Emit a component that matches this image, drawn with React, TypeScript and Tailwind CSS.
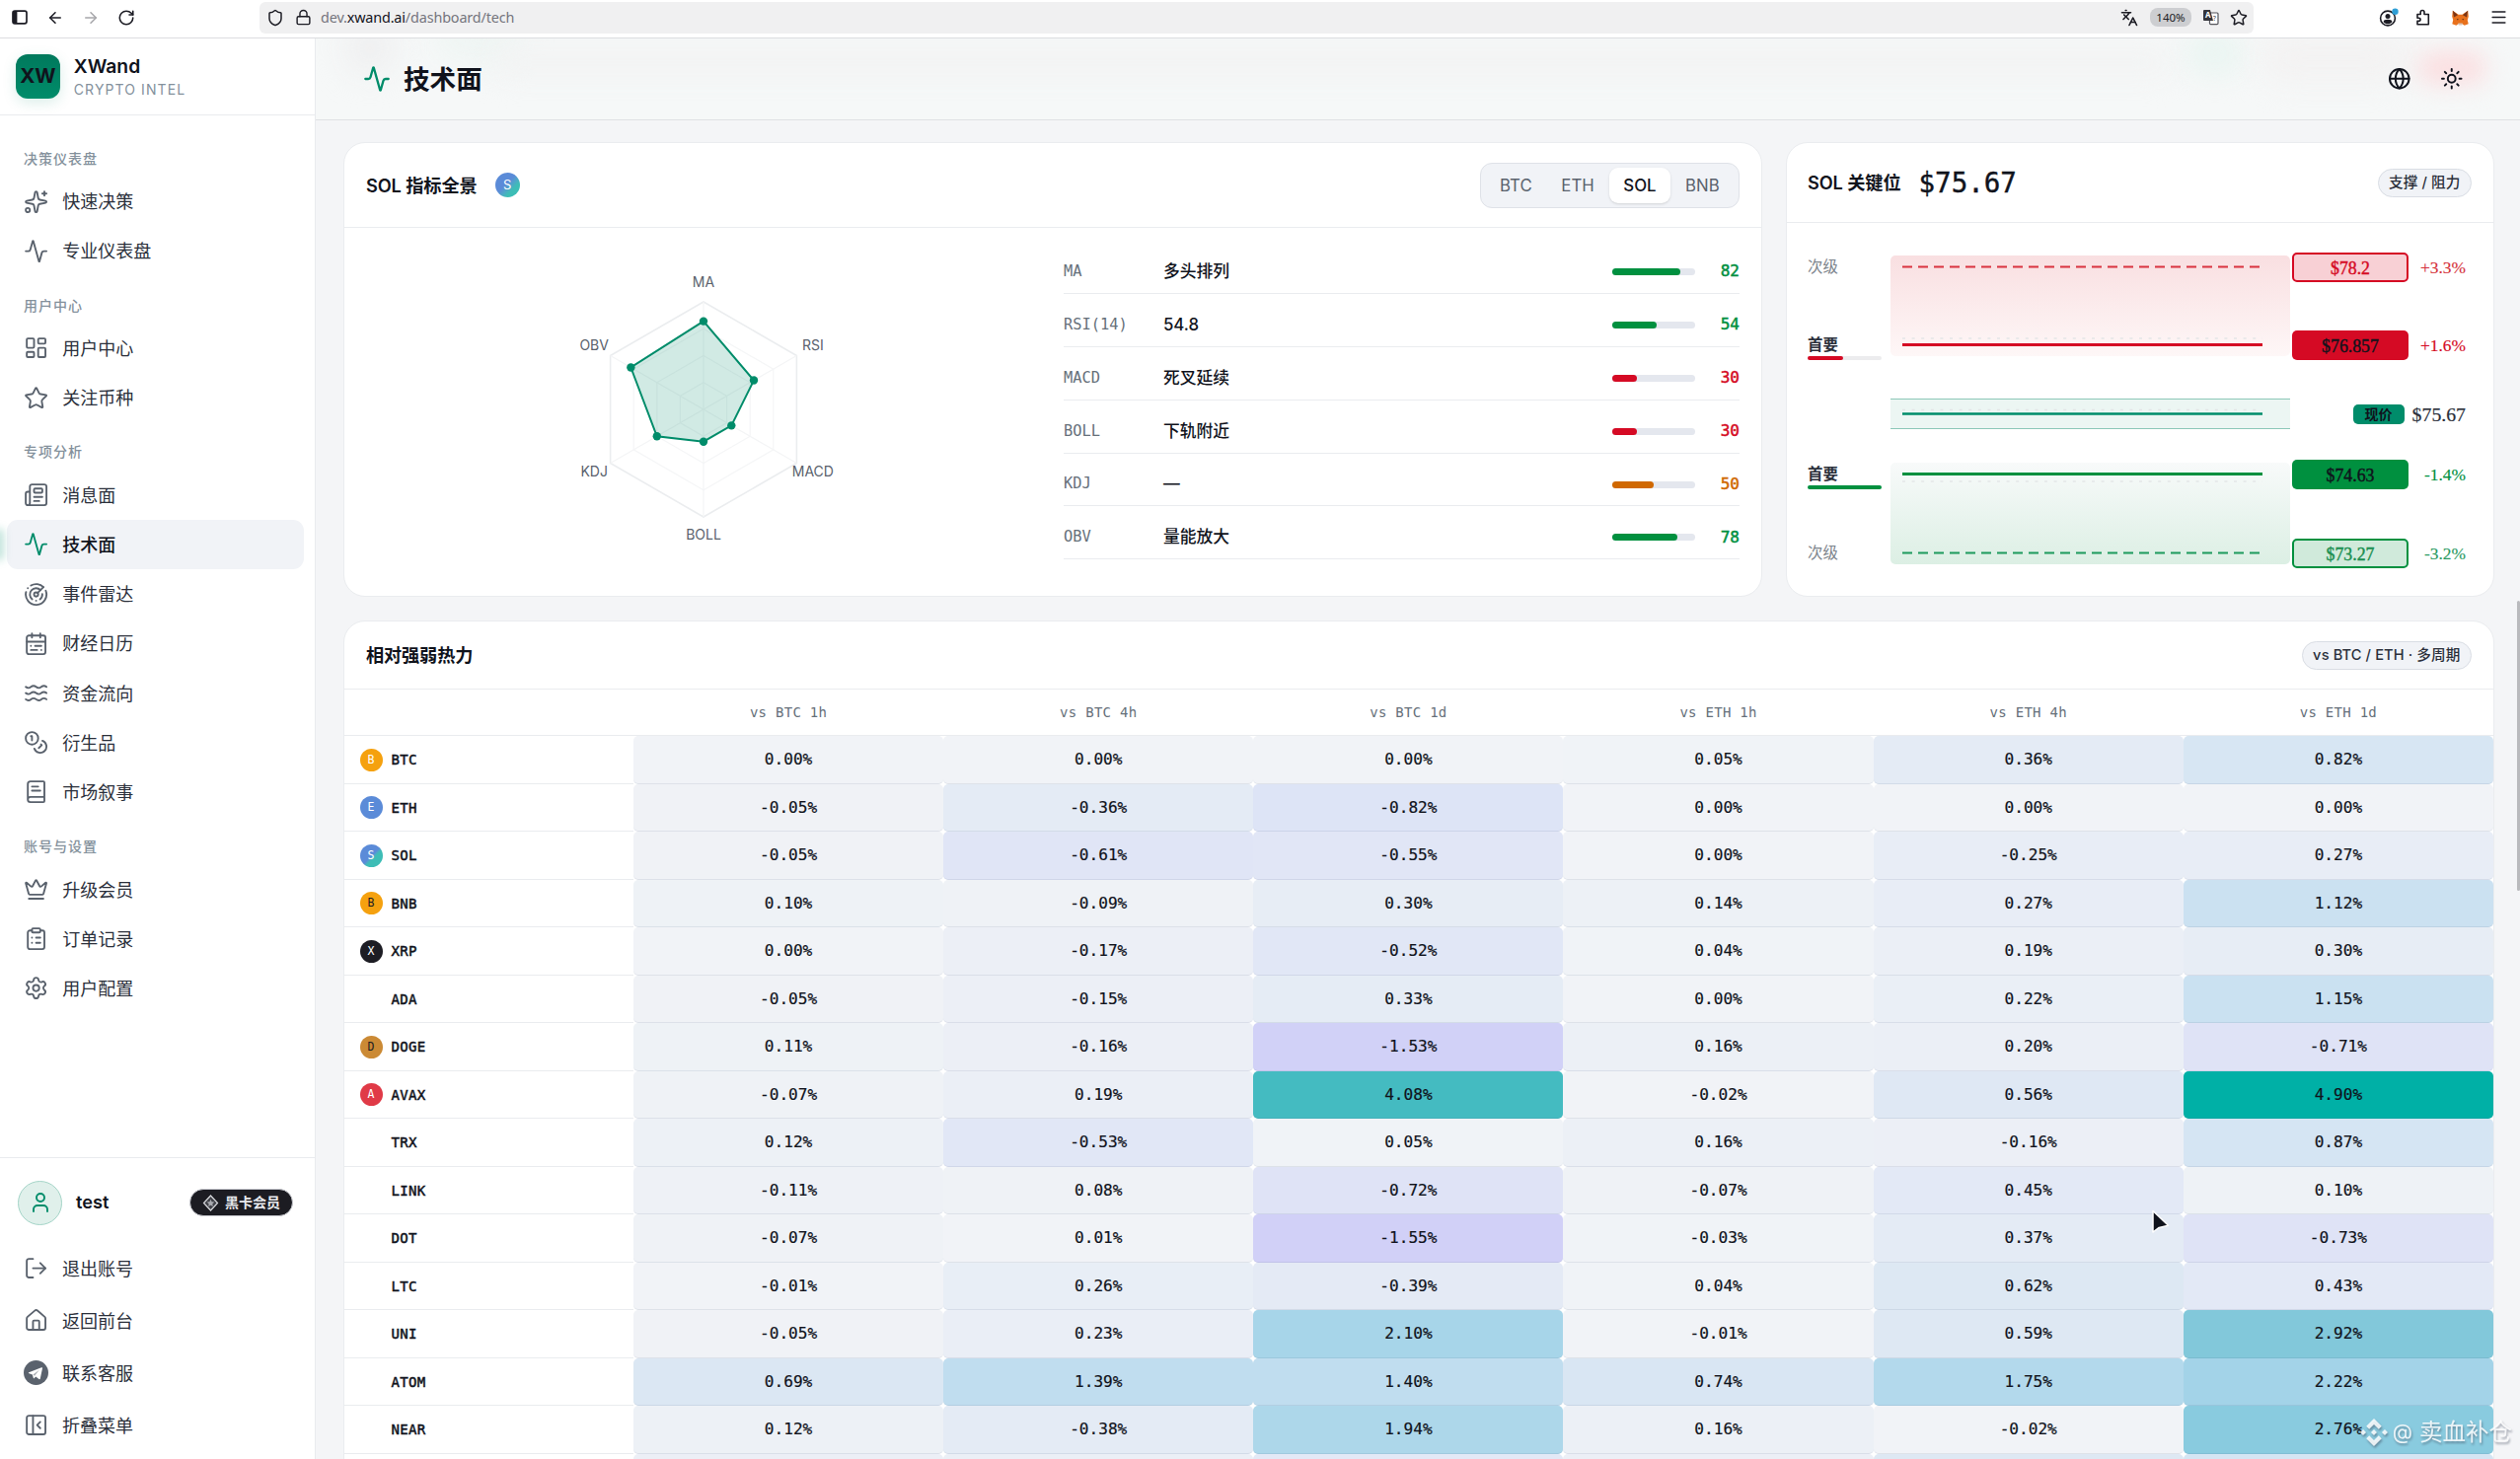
import type { ReactNode } from "react";
import clsx from "clsx";
import {
  Activity,
  ArrowLeft,
  ArrowRight,
  BookText,
  CalendarRange,
  ClipboardList,
  Coins,
  Crown,
  Globe,
  House,
  Languages,
  LayoutDashboard,
  Lock,
  LogOut,
  LucideIcon,
  Menu,
  Newspaper,
  PanelLeftClose,
  Radar,
  RotateCw,
  Settings,
  Shield,
  Sparkles,
  Star,
  Sun,
  User,
  Waves,
} from "lucide-react";

interface NavItem {
  label: string;
  icon: LucideIcon;
}

interface NavGroup {
  title: string;
  items: NavItem[];
}

interface Indicator {
  name: string;
  axis: string;
  value: string;
  score: number;
}

interface HeatRow {
  coin: string;
  badge?: string;
  values: number[];
}

const SANS = "font-['Inter','Noto_Sans_CJK_SC',sans-serif]";
const MONO = "font-['DejaVu_Sans_Mono','Liberation_Mono',monospace]";
const SERIF = "font-['Liberation_Serif',serif]";

const navGroups: NavGroup[] = [
  {
    title: "决策仪表盘",
    items: [
      { label: "快速决策", icon: Sparkles },
      { label: "专业仪表盘", icon: Activity },
    ],
  },
  {
    title: "用户中心",
    items: [
      { label: "用户中心", icon: LayoutDashboard },
      { label: "关注币种", icon: Star },
    ],
  },
  {
    title: "专项分析",
    items: [
      { label: "消息面", icon: Newspaper },
      { label: "技术面", icon: Activity },
      { label: "事件雷达", icon: Radar },
      { label: "财经日历", icon: CalendarRange },
      { label: "资金流向", icon: Waves },
      { label: "衍生品", icon: Coins },
      { label: "市场叙事", icon: BookText },
    ],
  },
  {
    title: "账号与设置",
    items: [
      { label: "升级会员", icon: Crown },
      { label: "订单记录", icon: ClipboardList },
      { label: "用户配置", icon: Settings },
    ],
  },
];

const indicators: Indicator[] = [
  { name: "MA", axis: "MA", value: "多头排列", score: 82 },
  { name: "RSI(14)", axis: "RSI", value: "54.8", score: 54 },
  { name: "MACD", axis: "MACD", value: "死叉延续", score: 30 },
  { name: "BOLL", axis: "BOLL", value: "下轨附近", score: 30 },
  { name: "KDJ", axis: "KDJ", value: "—", score: 50 },
  { name: "OBV", axis: "OBV", value: "量能放大", score: 78 },
];

const heatColumns = ["vs BTC 1h", "vs BTC 4h", "vs BTC 1d", "vs ETH 1h", "vs ETH 4h", "vs ETH 1d"];

const heatRows: HeatRow[] = [
  { coin: "BTC", badge: "bg-[#f5a10f] text-white", values: [0, 0, 0, 0.05, 0.36, 0.82] },
  { coin: "ETH", badge: "bg-[#5b8bd8] text-white", values: [-0.05, -0.36, -0.82, 0, 0, 0] },
  {
    coin: "SOL",
    badge: "bg-linear-135 from-[#5b8bd8] from-50% to-[#3dbdb6] to-60% text-white",
    values: [-0.05, -0.61, -0.55, 0, -0.25, 0.27],
  },
  { coin: "BNB", badge: "bg-[#f5a10f] text-[#1c1c22]", values: [0.1, -0.09, 0.3, 0.14, 0.27, 1.12] },
  { coin: "XRP", badge: "bg-[#1d1d24] text-white", values: [0, -0.17, -0.52, 0.04, 0.19, 0.3] },
  { coin: "ADA", values: [-0.05, -0.15, 0.33, 0, 0.22, 1.15] },
  { coin: "DOGE", badge: "bg-[#cb8a35] text-[#1c1c22]", values: [0.11, -0.16, -1.53, 0.16, 0.2, -0.71] },
  { coin: "AVAX", badge: "bg-[#e03a47] text-white", values: [-0.07, 0.19, 4.08, -0.02, 0.56, 4.9] },
  { coin: "TRX", values: [0.12, -0.53, 0.05, 0.16, -0.16, 0.87] },
  { coin: "LINK", values: [-0.11, 0.08, -0.72, -0.07, 0.45, 0.1] },
  { coin: "DOT", values: [-0.07, 0.01, -1.55, -0.03, 0.37, -0.73] },
  { coin: "LTC", values: [-0.01, 0.26, -0.39, 0.04, 0.62, 0.43] },
  { coin: "UNI", values: [-0.05, 0.23, 2.1, -0.01, 0.59, 2.92] },
  { coin: "ATOM", values: [0.69, 1.39, 1.4, 0.74, 1.75, 2.22] },
  { coin: "NEAR", values: [0.12, -0.38, 1.94, 0.16, -0.02, 2.76] },
];

type Stop = [number, number, number, number];

const heatStops: Stop[] = [
  [-1.55, 209, 208, 247],
  [-0.82, 221, 228, 246],
  [-0.72, 223, 227, 246],
  [-0.61, 224, 229, 246],
  [-0.36, 228, 235, 245],
  [-0.16, 236, 239, 246],
  [-0.08, 239, 242, 246],
  [0, 241, 243, 247],
  [0.1, 238, 242, 246],
  [0.2, 235, 239, 246],
  [0.36, 228, 235, 245],
  [0.45, 227, 233, 246],
  [0.6, 222, 232, 243],
  [0.87, 213, 229, 243],
  [1.4, 192, 221, 239],
  [1.75, 179, 217, 236],
  [2.22, 163, 211, 232],
  [2.76, 137, 203, 223],
  [2.92, 130, 200, 218],
  [4.08, 68, 187, 193],
  [4.9, 0, 176, 166],
];

// interpolate between the two nearest stops
function heatColor(v: number) {
  let i = heatStops.findIndex((s) => s[0] >= v);
  if (i < 1) i = 1;
  const a = heatStops[i - 1];
  const b = heatStops[i];
  const t = (v - a[0]) / (b[0] - a[0]);
  const mix = (k: number) => Math.round(a[k] + (b[k] - a[k]) * t);
  return `rgb(${mix(1)}, ${mix(2)}, ${mix(3)})`;
}

function BrowserBar() {
  return (
    <div className="h-[39px] shrink-0 flex items-center bg-white border-b border-[#dcdde0] text-[#1c1c24] font-['Noto_Sans',sans-serif]">
      <div className="w-[263px] flex items-center gap-[18px] pl-3 pb-[3px]">
        <svg width="17" height="16" viewBox="0 0 17 16">
          <rect x="1" y="1.2" width="14" height="12.6" rx="2" fill="none" stroke="currentColor" strokeWidth="1.7" />
          <rect x="1" y="1.5" width="4.4" height="12" fill="currentColor" />
        </svg>
        <ArrowLeft size={18} strokeWidth={2.1} />
        <ArrowRight size={18} strokeWidth={2.1} className="text-[#a7a7ab]" />
        <RotateCw size={18} strokeWidth={2.1} />
      </div>
      <div className="w-[2021px] h-8 mb-[3px] rounded-md bg-[#f0f0f1] flex items-center">
        <Shield size={18} strokeWidth={2} className="ml-[7px]" />
        <Lock size={17} strokeWidth={2} className="ml-[11px]" />
        <span className="ml-[9px] text-[14.4px] tracking-[-0.15px] text-[#75757d]">
          dev.<span className="text-[#15151d]">xwand.ai</span>/dashboard/tech
        </span>
        <Languages size={18} strokeWidth={2.2} className="ml-auto" />
        <span className="ml-[12px] w-[42px] h-[19px] rounded-lg bg-[#cdced1] text-[11.5px] leading-[19px] text-center">
          140%
        </span>
        <svg width="17" height="17" viewBox="0 0 17 17" className="ml-[11px]">
          <rect x="7.5" y="4" width="8.5" height="11.6" rx="1" fill="#fff" stroke="#55555c" strokeWidth="1.2" />
          <path d="M1 2a1 1 0 0 1 1-1h6l3 11H2a1 1 0 0 1-1-1z" fill="#34343b" />
          <text x="3" y="9.4" fontSize="8" fill="#fff" fontWeight="700">A</text>
          <text x="11" y="12" fontSize="6.5" fill="#34343b">?</text>
        </svg>
        <Star size={18} strokeWidth={2} className="ml-[11px] mr-[6px]" />
      </div>
      <div className="ml-auto pb-[3px] pr-3 flex items-center">
        <svg width="22" height="20" viewBox="0 0 22 20" className="mr-[15px]">
          <circle cx="10" cy="10.5" r="7.4" fill="none" stroke="currentColor" strokeWidth="1.6" />
          <circle cx="10" cy="8.6" r="2.5" fill="currentColor" />
          <path d="M5.6 14.2c0-1.700 1.800-2.400 4.400-2.400s4.400.7 4.400 2.400c-1.200 1.400-2.700 2-4.400 2s-3.200-.6-4.400-2z" fill="currentColor" />
          <circle cx="17.5" cy="3.8" r="3.2" fill="#2f9fd6" />
        </svg>
        <svg width="17" height="17" viewBox="0 0 17 17" className="mr-[21px]" fill="none" stroke="currentColor" strokeWidth="1.6" strokeLinejoin="round">
          <path d="M3 5.500h3.200V3.400a1.900 1.900 0 0 1 3.800 0v2.100h4.300v10.300H3v-3.400h1.500a1.600 1.600 0 0 0 0-3.200H3z" />
        </svg>
        <svg width="17" height="16" viewBox="0 0 17 16" className="mr-[21px]">
          <path d="M.8.8l5.700 4h4l5.700-4 .6 6-1 3.400.9 4-4 1.600-2.200-1.600h-4l-2.200 1.600-4-1.600.9-4L.2 6.800z" fill="#e8711c" />
          <path d="M.8.8l5.200 4.400-4 2.400zM16.200.8L11 5.200l4 2.400z" fill="#7a3516" />
          <path d="M6.200 13.600h4.600l-.6 1.800H6.800z" fill="#d9c4b4" />
          <path d="M4.800 9l2 .6-1 1zM12.200 9l-2 .6 1 1z" fill="#3c2418" />
        </svg>
        <Menu size={19} strokeWidth={2} />
      </div>
    </div>
  );
}

function NavRow({ item, active }: { item: NavItem; active?: boolean }) {
  const Icon = item.icon;
  return (
    <div
      className={clsx(
        "h-[50.2px] ml-[7px] mr-[11px] pl-[17px] rounded-[11px] flex items-center gap-3.5 text-[18px]",
        active ? "bg-[#f1f3f7] text-[#10131c] font-medium" : "text-[#2b303b]"
      )}>
      <Icon size={25.2} strokeWidth={1.8} className={active ? "text-[#008c6a]" : "text-[#5a626d]"} />
      <span className="pt-px">{item.label}</span>
    </div>
  );
}

function FooterRow({ label, children }: { label: string; children: ReactNode }) {
  return (
    <div className="h-[53px] pl-6 flex items-center gap-3.5 text-[18px] text-[#2b303b]">
      <span className="w-[25px] text-[#5a626d]">{children}</span>
      <span className="pt-px">{label}</span>
    </div>
  );
}

function Sidebar() {
  return (
    <aside className="relative w-[320px] shrink-0 flex flex-col bg-white border-r border-[#e9ebee]">
      <div className="h-[78px] shrink-0 border-b border-[#e9ebee] pl-4 flex items-center gap-[14px]">
        <div className="w-[44.8px] h-[44.8px] rounded-[12px] bg-linear-to-b from-[#00795c] to-[#008c6a] flex items-center justify-center text-[20.5px] font-bold text-[#10131c] shadow-[0_4px_14px_rgba(0,140,106,0.15)]">
          XW
        </div>
        <div className="pt-[2px]">
          <div className="text-[19.3px] leading-6 font-semibold text-[#10131c]">XWand</div>
          <div className="text-[14px] leading-6 tracking-[1.1px] text-[#84919c]">CRYPTO INTEL</div>
        </div>
      </div>

      <nav className="flex-1 pt-[13.8px]">
        {navGroups.map((group) => (
          <div key={group.title}>
            <div className="h-[48.4px] pt-[18px] pl-6 text-[14px] leading-6 tracking-[1px] font-medium text-[#84919c]">
              {group.title}
            </div>
            {group.items.map((item) => (
              <NavRow key={item.label} item={item} active={item.label === "技术面"} />
            ))}
          </div>
        ))}
      </nav>
      <div className="absolute -left-[5px] top-[497px] w-2 h-[32px] rounded-full bg-[#008c6a]/30 blur-[4px]" />

      <div className="h-[306px] shrink-0 border-t border-[#e9ebee] pt-[18.5px]">
        <div className="h-[53px] pl-[18px] pr-[22px] flex items-center">
          <div className="w-[45px] h-[45px] rounded-full border border-[#a5d5c8] bg-[#e0f0eb] text-[#008c6a] flex items-center justify-center">
            <User size={24} strokeWidth={1.9} />
          </div>
          <span className="ml-3.5 text-[18.2px] font-semibold text-[#10131c]">test</span>
          <div className="ml-auto w-[105px] h-[28px] rounded-full border border-[#c9cad0] bg-[#1c1c22] text-[#e9eaee] flex items-center justify-center gap-[6px]">
            <svg width="17" height="17" viewBox="0 0 17 17">
              <path d="M8.500 1l7 7.500-7 7.500-7-7.500z" fill="#3f4047" stroke="#d9dade" strokeWidth="1.2" />
              <path d="M8.500 4.800l1.100 2.500 2.700.3-2 1.800.6 2.700-2.400-1.400-2.400 1.400.6-2.700-2-1.800 2.700-.3z" fill="#a9aab0" />
            </svg>
            <span className="text-[14px] font-bold leading-none">黑卡会员</span>
          </div>
        </div>
        <div className="pt-[13.5px]">
          <FooterRow label="退出账号">
            <LogOut size={25.2} strokeWidth={1.8} />
          </FooterRow>
          <FooterRow label="返回前台">
            <House size={25.2} strokeWidth={1.8} />
          </FooterRow>
          <FooterRow label="联系客服">
            <svg width="25" height="25" viewBox="0 0 24 24">
              <circle cx="12" cy="12" r="12" fill="currentColor" />
              <path d="M5 11.800l12.300-4.900c.6-.2 1.100.1.900 1l-2.100 9.800c-.1.700-.6.900-1.200.5l-3.200-2.300-1.500 1.500c-.3.300-.6.200-.7-.2l-1-3.400-3.300-1c-.7-.2-.7-.7-.2-1z" fill="#fff" />
              <path d="M9 14l6.400-5-4.800 6z" fill="currentColor" opacity="0.5" />
            </svg>
          </FooterRow>
          <FooterRow label="折叠菜单">
            <PanelLeftClose size={25.2} strokeWidth={1.8} />
          </FooterRow>
        </div>
      </div>
    </aside>
  );
}

function Header() {
  return (
    <header className="relative h-[83px] shrink-0 overflow-hidden border-b border-[#dfe1e4] bg-[#f6f8f8] text-[#10131c]">
      <div className="absolute left-[30px] top-[-15px] w-[50px] h-[50px] rounded-full bg-[#eeeeef] blur-[16px]" />
      <div className="absolute left-[120px] top-[-30px] w-[90px] h-[55px] rounded-full bg-[#eff5f3] blur-[14px]" />
      <div className="absolute left-[180px] top-[10px] w-[1700px] h-[28px] rounded-full bg-[#f2f3f3] blur-[14px]" />
      <div className="absolute left-[1895px] top-[-10px] w-[60px] h-[50px] rounded-full bg-[#ebf5f2] blur-[12px]" />
      <div className="absolute left-[1970px] top-[-5px] w-[150px] h-[50px] rounded-full bg-[#f3f2f2] blur-[14px]" />
      <div className="absolute left-[2130px] top-[14px] w-[70px] h-[32px] rounded-full bg-[#fbdddf] blur-[12px]" />
      <div className="relative h-full pl-[48px] pr-[58px] flex items-center">
        <Activity size={28} strokeWidth={2} className="text-[#008c6a]" />
        <h1 className="ml-[13px] pt-px text-[26.6px] font-bold">技术面</h1>
        <div className="ml-auto flex items-center gap-[29.5px]">
          <Globe size={23.5} strokeWidth={2} />
          <Sun size={23.5} strokeWidth={2} />
        </div>
      </div>
    </header>
  );
}

function Pill({ children }: { children: ReactNode }) {
  return (
    <span className="h-[29px] px-[10.5px] rounded-full border border-[#d9dde4] bg-[#f1f3f7] text-[14.6px] tracking-[0.13px] leading-[27px] font-medium text-[#2b303b]">
      {children}
    </span>
  );
}

// point on one of the six radar axes, starting at the top and going clockwise
function axisPoint(i: number, r: number) {
  const a = (Math.PI / 3) * i - Math.PI / 2;
  return [160 + r * Math.cos(a), 160 + r * Math.sin(a)];
}

function hexagon(r: number) {
  return [0, 1, 2, 3, 4, 5].map((i) => axisPoint(i, r).join(",")).join(" ");
}

function RadarChart() {
  const R = 109;
  return (
    <svg width="320" height="320" viewBox="0 0 320 320">
      {[0.25, 0.5, 0.75].map((k) => (
        <polygon key={k} points={hexagon(R * k)} fill="none" stroke="#f5f6f7" strokeWidth="1.2" />
      ))}
      <polygon points={hexagon(R)} fill="none" stroke="#ebedef" strokeWidth="1.6" />
      {indicators.map((ind, i) => {
        const [x, y] = axisPoint(i, R);
        return <line key={ind.name} x1="160" y1="160" x2={x} y2={y} stroke="#f4f5f6" strokeWidth="1.2" />;
      })}
      <polygon
        points={indicators.map((ind, i) => axisPoint(i, (R * ind.score) / 100).join(",")).join(" ")}
        fill="#008c6a"
        fillOpacity="0.18"
        stroke="#008c6a"
        strokeWidth="2"
      />
      {indicators.map((ind, i) => {
        const [x, y] = axisPoint(i, (R * ind.score) / 100);
        const [lx, ly] = axisPoint(i, 128);
        return (
          <g key={ind.name}>
            <circle cx={x} cy={y} r="4.2" fill="#008c6a" />
            <text x={lx} y={ly + 4.2} textAnchor="middle" fontSize="14" fill="#5a626d">
              {ind.axis}
            </text>
          </g>
        );
      })}
    </svg>
  );
}

function IndicatorCard() {
  return (
    <section className="w-[1438px] h-[461px] rounded-[22px] border border-[#eaecef] bg-white">
      <div className="h-[86px] border-b border-[#eaecef] px-[22px] flex items-center">
        <h2 className="pt-0.5 text-[18.2px] tracking-[-0.1px] font-semibold text-[#10131c]">SOL 指标全景</h2>
        <span className="ml-[18px] w-[25px] h-[25px] rounded-full bg-linear-135 from-[#5b8bd8] from-45% to-[#3dbdb6] to-70% text-white text-[13px] leading-[25px] text-center">
          S
        </span>
        <div className="ml-auto h-[46px] rounded-[12px] border border-[#dfe2e8] bg-[#f1f3f7] px-[4.5px] flex items-center text-[16.8px] text-[#5a626d]">
          {["BTC", "ETH", "SOL", "BNB"].map((coin) => (
            <span
              key={coin}
              className={clsx(
                "h-[36px] px-[14.8px] rounded-[9px] leading-[36px]",
                coin === "SOL" && "bg-white text-[#10131c] font-medium shadow-sm"
              )}>
              {coin}
            </span>
          ))}
        </div>
      </div>
      <div className="flex">
        <div className="w-[728px] pt-[24px] flex justify-center">
          <RadarChart />
        </div>
        <div className="ml-px w-[685px] pt-[13px]">
          {indicators.map((ind) => {
            const tone = ind.score > 50 ? "up" : ind.score === 50 ? "flat" : "down";
            return (
              <div key={ind.name} className="h-[53.9px] pt-[10px] border-b border-[#eaecef] flex items-center">
                <span className={clsx("w-[101px] text-[15.4px] text-[#66707a]", MONO)}>{ind.name}</span>
                <span className="text-[16.8px] font-medium text-[#10131c]">{ind.value}</span>
                <div className="ml-auto w-[84px] h-[7px] rounded-full bg-[#e4e7ee]">
                  <div
                    className={clsx(
                      "h-full rounded-full",
                      tone === "up" && "bg-[#00903f]",
                      tone === "flat" && "bg-[#d06800]",
                      tone === "down" && "bg-[#d50a24]"
                    )}
                    style={{ width: `${ind.score}%` }}
                  />
                </div>
                <span
                  className={clsx(
                    "w-[45px] text-right text-[16px] [-webkit-text-stroke:0.5px]",
                    MONO,
                    tone === "up" && "text-[#00903f]",
                    tone === "flat" && "text-[#d06800]",
                    tone === "down" && "text-[#d50a24]"
                  )}>
                  {ind.score}
                </span>
              </div>
            );
          })}
        </div>
      </div>
    </section>
  );
}

function LevelsPlot() {
  return (
    <svg width="405" height="320" viewBox="0 0 405 320">
      <defs>
        <linearGradient id="resist" x1="0" y1="0" x2="0" y2="1">
          <stop offset="0" stopColor="#f9dfe1" />
          <stop offset="1" stopColor="#fef7f7" />
        </linearGradient>
        <linearGradient id="support" x1="0" y1="0" x2="0" y2="1">
          <stop offset="0" stopColor="#f8fafa" />
          <stop offset="1" stopColor="#dcefe4" />
        </linearGradient>
      </defs>
      <rect x="0" y="3" width="405" height="102" rx="5" fill="url(#resist)" />
      <rect x="0" y="213" width="405" height="103" rx="5" fill="url(#support)" />
      <rect x="0" y="148.5" width="405" height="30" fill="#ecf6f3" />
      <path d="M0 148.500H405M0 178.500H405" stroke="#8cc8b8" strokeWidth="1" />
      <path d="M12 87H377M12 159.500H377M12 232H377" stroke="#e3e6e7" strokeWidth="1.5" strokeDasharray="3 6.6" />
      <path d="M12 14.500H377" stroke="#d9333f" strokeWidth="2" strokeDasharray="10 6" />
      <path d="M12 93.500H377" stroke="#d50a24" strokeWidth="3" />
      <path d="M12 163.500H377" stroke="#008c6a" strokeWidth="2.6" />
      <path d="M12 224.500H377" stroke="#00903f" strokeWidth="3" />
      <path d="M12 304.500H377" stroke="#1d9a5c" strokeWidth="2" strokeDasharray="10 6" />
    </svg>
  );
}

interface LevelTagProps {
  price: string;
  pct: string;
  tag: string;
  tone: string;
  className?: string;
}

function LevelTag({ price, pct, tag, tone, className }: LevelTagProps) {
  return (
    <div className={clsx("h-[30px] flex items-center", className)}>
      <span
        className={clsx(
          "w-[118px] h-[30px] rounded-[5px] text-[17.8px] text-center [-webkit-text-stroke:0.4px]",
          tag
        )}>
        {price}
      </span>
      <span className={clsx("ml-auto pt-px text-[17.4px] [-webkit-text-stroke:0.15px]", tone)}>{pct}</span>
    </div>
  );
}

function KeyLevelsCard() {
  return (
    <section className="w-[718px] h-[461px] rounded-[22px] border border-[#eaecef] bg-white">
      <div className="h-[81px] border-b border-[#eaecef] pl-[21px] pr-[22px] flex items-center">
        <h2 className="pt-0.5 text-[18.2px] tracking-[-0.1px] font-semibold text-[#10131c]">SOL 关键位</h2>
        <span className={clsx("ml-[18px] pt-0.5 text-[27.5px] text-[#10131c] [-webkit-text-stroke:0.4px]", MONO)}>$75.67</span>
        <span className="ml-auto flex">
          <Pill>支撑 / 阻力</Pill>
        </span>
      </div>
      <div className="pl-[21px] pt-[30px] flex">
        <div className="w-[84px] text-[15.4px] leading-[30px]">
          <div className="h-[30px] text-[#7d848c]">次级</div>
          <div className="relative mt-[49px] h-[30px] font-bold text-[#2b303b]">
            首要
            <div className="absolute left-0 bottom-0 w-[75px] h-1 rounded-full bg-[#ececee]">
              <div className="w-[36px] h-full rounded-full bg-[#d50a24]" />
            </div>
          </div>
          <div className="relative mt-[101px] h-[30px] font-bold text-[#2b303b]">
            首要
            <div className="absolute left-0 bottom-0 w-[75px] h-1 rounded-full bg-[#00903f]" />
          </div>
          <div className="mt-[50px] h-[30px] text-[#7d848c]">次级</div>
        </div>
        <LevelsPlot />
        <div className={clsx("ml-[2px] w-[176px]", SERIF)}>
          <LevelTag price="$78.2" pct="+3.3%" tag="border-2 border-[#d50a24] bg-[#f8d0d5] text-[#d50a24] leading-[28px]" tone="text-[#d5323c]" />
          <LevelTag price="$76.857" pct="+1.6%" tag="bg-[#d50a24] text-[#10131c] leading-[32px]" tone="text-[#d50a24]" className="mt-[49px]" />
          <div className="mt-[40px] h-[30px] flex items-center justify-end gap-2">
            <span className="w-[52px] h-5 rounded-[5px] bg-[#008c6a] text-[14px] leading-[18px] font-bold text-center text-[#10131c] font-['Noto_Sans_CJK_SC',sans-serif]">
              现价
            </span>
            <span className="pt-0.5 text-[19.8px] [-webkit-text-stroke:0.2px] text-[#2b303b]">$75.67</span>
          </div>
          <LevelTag price="$74.63" pct="-1.4%" tag="bg-[#00903f] text-[#10131c] leading-[32px]" tone="text-[#00903f]" className="mt-[31px]" />
          <LevelTag price="$73.27" pct="-3.2%" tag="border-2 border-[#00903f] bg-[#d0eadb] text-[#1a8f50] leading-[28px]" tone="text-[#2a9a62]" className="mt-[50px]" />
        </div>
      </div>
    </section>
  );
}

function HeatTable() {
  return (
    <section className="h-[900px] rounded-t-[22px] border border-[#eaecef] bg-white">
      <div className="h-[69px] border-b border-[#eaecef] px-[22px] flex items-center">
        <h2 className="pt-0.5 text-[18.2px] tracking-[-0.15px] font-semibold text-[#10131c]">相对强弱热力</h2>
        <span className="ml-auto flex">
          <Pill>vs BTC / ETH · 多周期</Pill>
        </span>
      </div>
      <div className={MONO}>
        <div className="h-[47px] border-b border-[#eaecef] grid grid-cols-[293px_repeat(6,1fr)] items-center">
          <span />
          {heatColumns.map((col) => (
            <span key={col} className="pt-px text-center text-[14px] tracking-[0.28px] text-[#66707a]">
              {col}
            </span>
          ))}
        </div>
        {heatRows.map((row) => (
          <div key={row.coin} className="h-[48.5px] grid grid-cols-[293px_repeat(6,1fr)]">
            <div className="border-b border-[#eaecef] pl-[15.5px] flex items-center gap-[9px]">
              <span className={clsx("mt-px w-[23px] h-[23px] rounded-full text-[11.5px] leading-[23px] text-center", row.badge)}>
                {row.badge && row.coin[0]}
              </span>
              <span className="pt-0.5 text-[14px] tracking-[0.28px] text-[#10131c] [-webkit-text-stroke:0.5px]">{row.coin}</span>
            </div>
            {row.values.map((v, i) => (
              <div
                key={i}
                className="pt-px rounded-[5px] border-b border-[#3c5078]/10 flex items-center justify-center text-[16.1px] text-[#10131c] [-webkit-text-stroke:0.2px]"
                style={{ backgroundColor: heatColor(v) }}>
                {v.toFixed(2)}%
              </div>
            ))}
          </div>
        ))}
        <div className="h-[48.5px] grid grid-cols-[293px_repeat(6,1fr)]">
          <span />
          {[-0.16, 0.2, 0.45, -0.16, 0.6, 0.87].map((v, i) => (
            <span key={i} className="rounded-t-[5px]" style={{ backgroundColor: heatColor(v) }} />
          ))}
        </div>
      </div>
    </section>
  );
}

function Overlays() {
  return (
    <>
      <div className="absolute right-0 top-[609px] w-[3px] h-[294px] rounded-full bg-[#b9babd]" />
      <svg className="absolute left-[2179px] top-[1225px]" width="22" height="28" viewBox="0 0 22 28">
        <path d="M3 2.500v21.500l6.200-4.600 9.300-2.200z" fill="#10131c" stroke="#fff" strokeWidth="1.5" strokeLinejoin="round" />
      </svg>
      <div className="absolute right-[8px] top-[1434px] h-9 flex items-center text-white/85 text-[23.5px] [filter:drop-shadow(1px_2px_1px_rgba(60,70,90,0.55))]">
        <svg width="28" height="28" viewBox="0 0 27 27" fill="currentColor">
          <path d="M13.500 0l7.500 7.500-2.900 2.900-4.600-4.600-4.600 4.600L6 7.500zM13.500 27L6 19.500l2.900-2.900 4.600 4.600 4.600-4.600 2.900 2.900zM13.500 10.600l2.900 2.900-2.900 2.900-2.900-2.900zM2.900 10.600l2.900 2.900-2.900 2.900L0 13.500zM24.100 10.600l2.900 2.900-2.900 2.900-2.900-2.900z" />
        </svg>
        <span className="ml-[5px] text-[21px]">@</span>
        <span className="ml-[7px]">卖血补仓</span>
      </div>
    </>
  );
}

export default function App() {
  return (
    <div className={clsx("relative w-[2554px] h-[1479px] overflow-hidden flex flex-col bg-[#f4f5f7]", SANS)}>
      <BrowserBar />
      <div className="flex flex-1 min-h-0">
        <Sidebar />
        <main className="flex-1 min-w-0 flex flex-col">
          <Header />
          <div className="pl-[28px] pr-[26px] pt-[22px]">
            <div className="flex justify-between">
              <IndicatorCard />
              <KeyLevelsCard />
            </div>
            <div className="mt-[24px]">
              <HeatTable />
            </div>
          </div>
        </main>
      </div>
      <Overlays />
    </div>
  );
}
